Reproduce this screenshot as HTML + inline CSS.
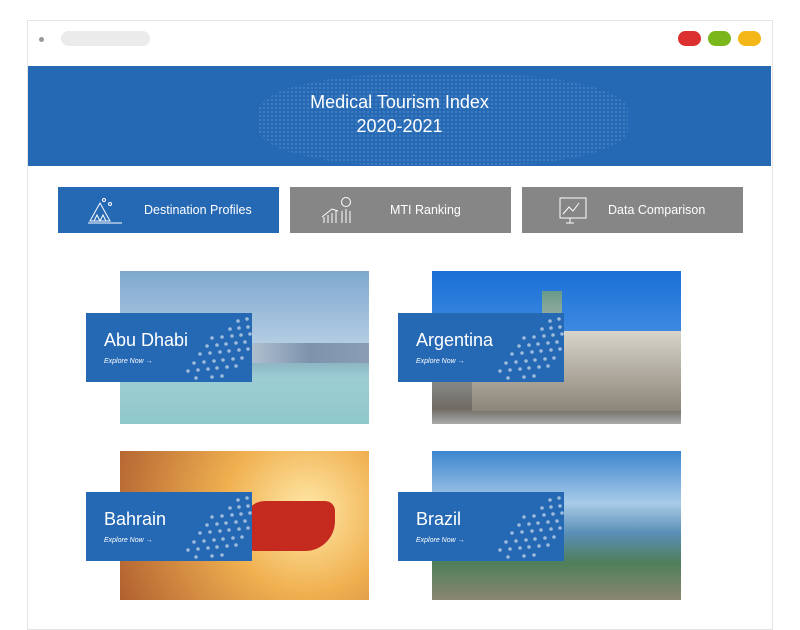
<!DOCTYPE html>
<html><head><style>
*{margin:0;padding:0;box-sizing:border-box}
body{width:800px;height:615px;background:#fff;font-family:"Liberation Sans",sans-serif;position:relative;overflow:hidden}
.frame{position:absolute;left:27px;top:20px;width:746px;height:610px;border:1px solid #e4e4e4;background:#fff}
.dot{position:absolute;left:39px;top:37px;width:5px;height:5px;border-radius:50%;background:#999}
.pill{position:absolute;left:61px;top:31px;width:89px;height:15px;border-radius:8px;background:#ebebeb}
.tl{position:absolute;top:31px;width:23px;height:15px;border-radius:8px}
.banner{position:absolute;left:28px;top:66px;width:743px;height:100px;background:#2568b4;color:#fff;text-align:center;font-size:18px;line-height:24px;padding-top:24px;overflow:hidden}
.btn{position:absolute;top:187px;width:221px;height:46px;color:#fff;font-size:12.5px;line-height:46px}
.btn span{position:absolute;left:86px}
.btn svg{position:absolute;left:30px;top:10px}
.img{position:absolute;width:249px;overflow:hidden}
.lab{position:absolute;width:166px;height:69px;background:#2568b4;color:#fff;overflow:hidden}
.lab b{position:absolute;left:18px;top:17px;font-weight:normal;font-size:18px}
.lab i{position:absolute;left:18px;top:45px;font-size:7px}
.lab svg{position:absolute;left:0;top:0}
</style></head><body>
<div class="frame"></div>
<div class="dot"></div><div class="pill"></div>
<div class="tl" style="left:678px;background:#dc2f2f"></div>
<div class="tl" style="left:708px;background:#79b71a"></div>
<div class="tl" style="left:738px;background:#f5b617"></div>
<div class="banner">
<div style="position:absolute;left:230px;top:8px;width:370px;height:92px;background:radial-gradient(circle,rgba(255,255,255,.13) 1px,transparent 1.4px);background-size:4px 4px;border-radius:40%"></div>
<div style="position:relative">Medical Tourism Index<br>2020-2021</div></div>
<div class="btn" style="left:58px;background:#2568b4"><svg width="36" height="28" viewBox="0 0 36 28" fill="none" stroke="#fff" stroke-width="1"><path d="M2 24L12 6L22 24Z M6 24l3-6 3 6 M12 24l3-6 3 6 M0 26h34"/><circle cx="16" cy="3" r="1.5"/><circle cx="22" cy="7" r="1.5"/></svg><span>Destination Profiles</span></div>
<div class="btn" style="left:290px;background:#868686"><svg width="36" height="28" viewBox="0 0 36 28" fill="none" stroke="#fff" stroke-width="1"><path d="M22 26V14 M26 26V12 M30 26V14 M4 26v-6 M8 26v-8 M12 26v-10 M16 26v-12 M2 20l10-8 6 2"/><circle cx="26" cy="5" r="4.5"/></svg><span style="left:100px">MTI Ranking</span></div>
<div class="btn" style="left:522px;background:#868686"><svg width="36" height="28" viewBox="0 0 36 28" fill="none" stroke="#fff" stroke-width="1"><rect x="8" y="1" width="26" height="20"/><path d="M11 17l6-7 4 4 6-8 M18 21v5 M14 26h8"/></svg><span>Data Comparison</span></div>

<svg width="0" height="0" style="position:absolute"><defs><g id="d" fill="rgba(255,255,255,.55)">
<circle cx="152" cy="8" r="1.8"/><circle cx="161" cy="6" r="1.8"/>
<circle cx="144" cy="16" r="1.8"/><circle cx="153" cy="15" r="1.8"/><circle cx="162" cy="14" r="1.8"/>
<circle cx="126" cy="25" r="1.8"/><circle cx="136" cy="24" r="1.8"/><circle cx="146" cy="23" r="1.8"/><circle cx="155" cy="22" r="1.8"/><circle cx="164" cy="21" r="1.8"/>
<circle cx="121" cy="33" r="1.8"/><circle cx="131" cy="32" r="1.8"/><circle cx="140" cy="31" r="1.8"/><circle cx="150" cy="30" r="1.8"/><circle cx="159" cy="29" r="1.8"/>
<circle cx="114" cy="41" r="1.8"/><circle cx="124" cy="40" r="1.8"/><circle cx="134" cy="39" r="1.8"/><circle cx="143" cy="38" r="1.8"/><circle cx="153" cy="37" r="1.8"/><circle cx="162" cy="36" r="1.8"/>
<circle cx="108" cy="50" r="1.8"/><circle cx="118" cy="49" r="1.8"/><circle cx="128" cy="48" r="1.8"/><circle cx="137" cy="47" r="1.8"/><circle cx="147" cy="46" r="1.8"/><circle cx="156" cy="45" r="1.8"/>
<circle cx="102" cy="58" r="1.8"/><circle cx="112" cy="57" r="1.8"/><circle cx="122" cy="56" r="1.8"/><circle cx="131" cy="55" r="1.8"/><circle cx="141" cy="54" r="1.8"/><circle cx="150" cy="53" r="1.8"/>
<circle cx="110" cy="65" r="1.8"/><circle cx="126" cy="64" r="1.8"/><circle cx="136" cy="63" r="1.8"/>
</g></defs></svg>

<div class="img" style="left:120px;top:271px;height:153px;background:linear-gradient(#7fa8cf 0%,#b8d0e4 52%,#8ab0c0 58%,#9ccdd3 70%,#8fc8cc 100%)">
<div style="position:absolute;left:130px;top:72px;width:119px;height:20px;background:linear-gradient(90deg,#b0c0d0,#7d93ad,#8a9db5)"></div></div>
<div class="lab" style="left:86px;top:313px"><svg width="166" height="69"><use href="#d"/></svg><b>Abu Dhabi</b><i>Explore Now →</i></div>

<div class="img" style="left:432px;top:271px;height:153px;background:linear-gradient(#1a6fd6 0%,#4690e3 50%,#9aa0a2 58%,#6f6b63 90%,#aaa 100%)">
<div style="position:absolute;left:110px;top:20px;width:20px;height:60px;background:linear-gradient(#6a9a8a,#c9c5ba)"></div>
<div style="position:absolute;left:40px;top:60px;width:209px;height:80px;background:linear-gradient(#d9d5ca,#8b857a)"></div></div>
<div class="lab" style="left:398px;top:313px"><svg width="166" height="69"><use href="#d"/></svg><b>Argentina</b><i>Explore Now →</i></div>

<div class="img" style="left:120px;top:451px;height:149px;background:radial-gradient(circle at 75% 40%,#ffe9a8,#f0b050 40%,#b06030 100%)">
<div style="position:absolute;left:125px;top:50px;width:90px;height:50px;background:#c52a1e;border-radius:20px 10px 30px 10px"></div></div>
<div class="lab" style="left:86px;top:492px"><svg width="166" height="69"><use href="#d"/></svg><b>Bahrain</b><i>Explore Now →</i></div>

<div class="img" style="left:432px;top:451px;height:149px;background:linear-gradient(#3c86cf 0%,#a9cbe8 35%,#5a8fb7 55%,#4f7f5a 75%,#8a8670 100%)"></div>
<div class="lab" style="left:398px;top:492px"><svg width="166" height="69"><use href="#d"/></svg><b>Brazil</b><i>Explore Now →</i></div>
</body></html>
